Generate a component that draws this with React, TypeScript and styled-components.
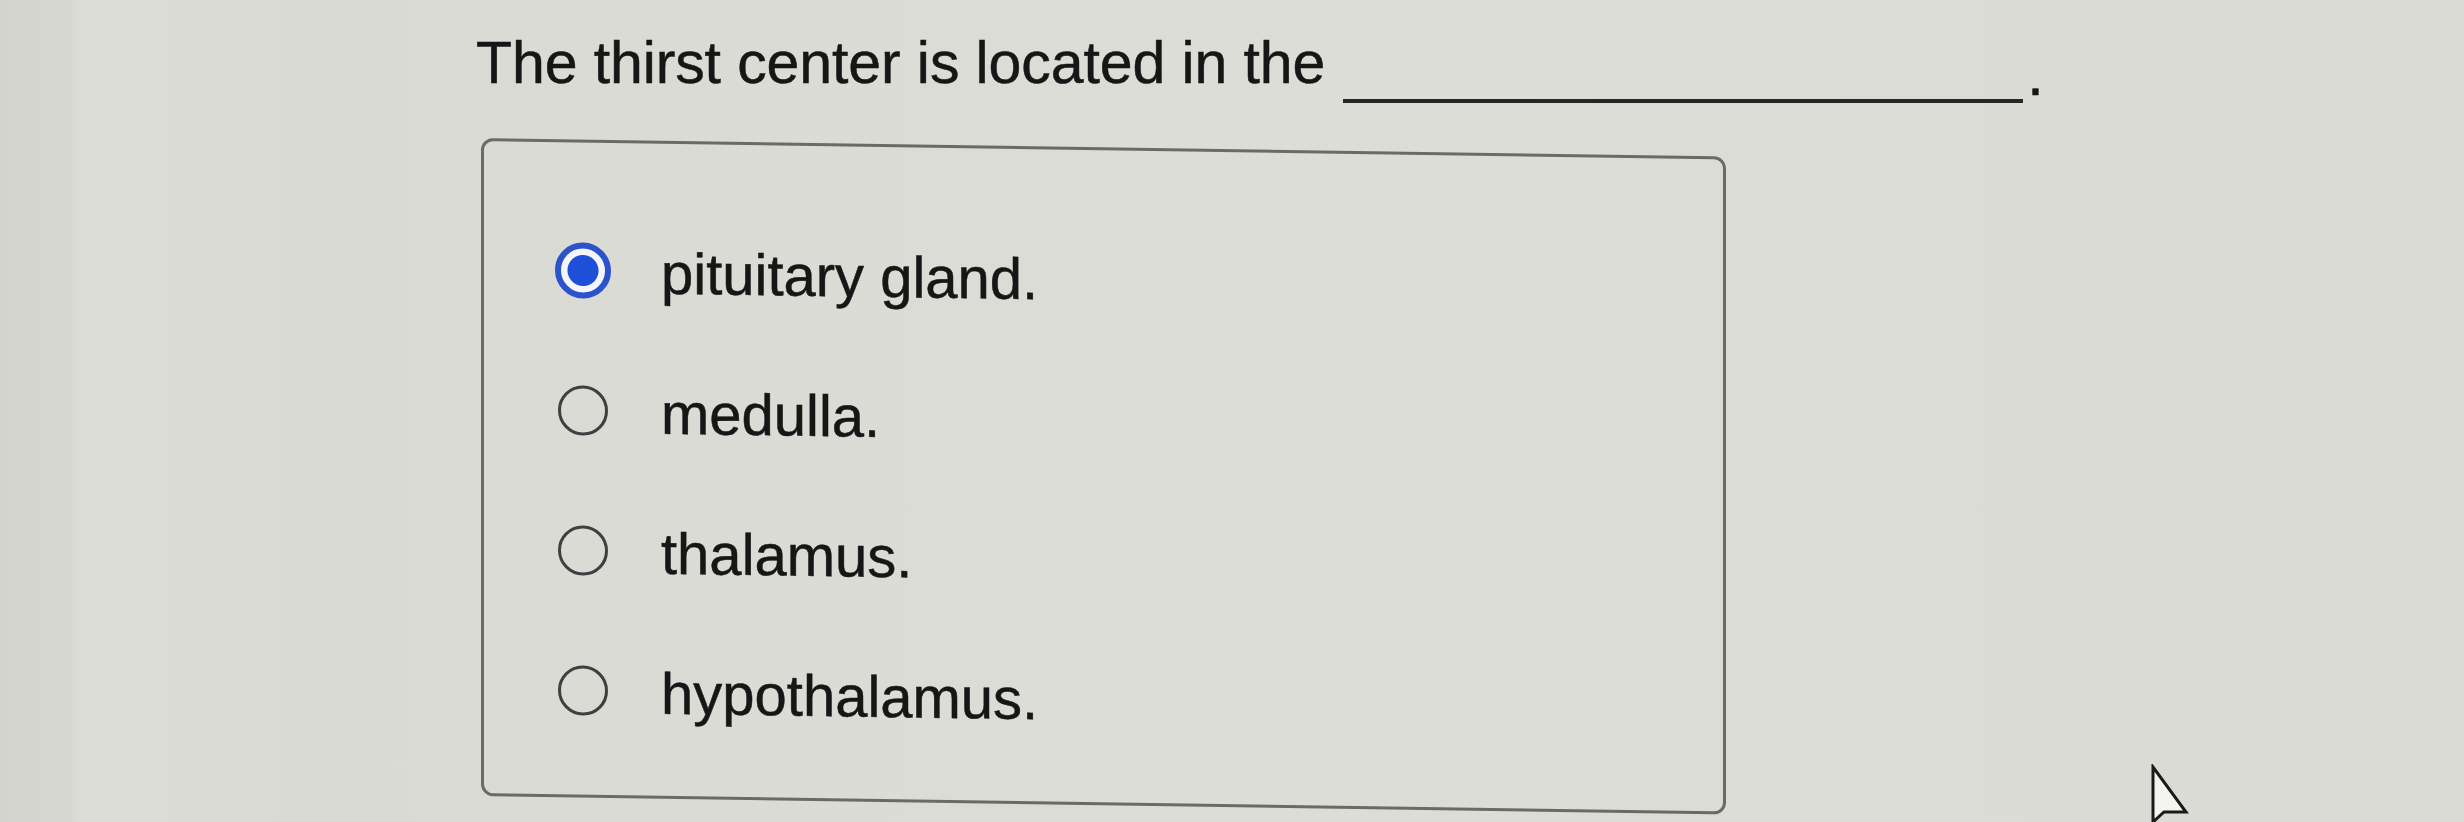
import * as React from "react";
import styled, { createGlobalStyle } from "styled-components";

const GlobalStyle = createGlobalStyle`
  html, body {
    margin: 0;
    padding: 0;
  }
  body {
    background: linear-gradient(90deg, #d3d4ce 0px, #d6d7d1 70px, #dcddd7 78px, #d9dad4 300px, #dcddd7 1300px, #dadbd5 2464px);
    font-family: "Liberation Sans", Arial, sans-serif;
    color: #161616;
  }
`;

const Page = styled.div`
  position: relative;
  width: 2464px;
  height: 822px;
  overflow: hidden;
  box-sizing: border-box;
  padding: 28px 0 0 476px;
  display: flex;
  flex-direction: column;
`;

const Question = styled.div`
  height: 110px;
  font-size: 59px;
  line-height: 70px;
  white-space: nowrap;
  letter-spacing: -0.1px;
  -webkit-text-stroke: 0.5px #161616;
`;

const Blank = styled.span`
  display: inline-block;
  width: 680px;
  height: 0;
  margin-left: 18px;
  border-bottom: 4px solid #262626;
  vertical-align: -20px;
`;

const Period = styled.span`
  margin-left: 4px;
  vertical-align: -12px;
`;

const Card = styled.div`
  margin: 0 0 0 5px;
  width: 1245px;
  height: 658px;
  box-sizing: border-box;
  border: 3px solid #6a6b68;
  border-radius: 12px;
  padding: 58px 0 0 74px;
  display: flex;
  flex-direction: column;
  transform: skewY(0.85deg);
  transform-origin: left top;
`;

const Option = styled.label`
  height: 140px;
  display: flex;
  align-items: center;
  gap: 53px;
  cursor: pointer;
`;

const Radio = styled.span<{ $checked: boolean }>`
  flex: none;
  box-sizing: border-box;
  border-radius: 50%;
  width: ${(p) => (p.$checked ? "56px" : "50px")};
  height: ${(p) => (p.$checked ? "56px" : "50px")};
  margin: ${(p) => (p.$checked ? "0 -3px" : "0")};
  border: ${(p) => (p.$checked ? "6px solid #2c52cc" : "3.5px solid #3f3f3f")};
  background: ${(p) =>
    p.$checked
      ? "radial-gradient(circle, #1d4fd8 0 15px, #f4f6fb 16px)"
      : "transparent"};
`;

const Label = styled.span`
  font-size: 58px;
  line-height: 58px;
  padding-top: 4px;
  white-space: nowrap;
  -webkit-text-stroke: 0.5px #161616;
`;

const Pointer = styled.svg`
  position: absolute;
  left: 2150px;
  top: 764px;
`;

const options = ["pituitary gland.", "medulla.", "thalamus.", "hypothalamus."];

const App = () => {
  const [picked, setPicked] = React.useState(0);

  return (
    <>
      <GlobalStyle />
      <Page>
        <Question>
          The thirst center is located in the
          <Blank />
          <Period>.</Period>
        </Question>
        <Card>
          {options.map((text, i) => (
            <Option key={`opt-${i}`} onClick={() => setPicked(i)}>
              <Radio $checked={picked === i} />
              <Label>{text}</Label>
            </Option>
          ))}
        </Card>
        <Pointer width="40" height="60" viewBox="0 0 40 60">
          <path
            d="M3 3 L3 58 L14 48 L36 48 Z"
            fill="#f4f4f0"
            stroke="#1a1a1a"
            strokeWidth="3"
            strokeLinejoin="miter"
          />
        </Pointer>
      </Page>
    </>
  );
};

export default App;
